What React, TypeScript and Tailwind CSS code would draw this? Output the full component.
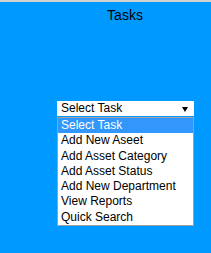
import React from 'react';

const options = [
    'Select Task',
    'Add New Aseet',
    'Add Asset Category',
    'Add Asset Status',
    'Add New Department',
    'View Reports',
    'Quick Search',
];

const TaskSelect: React.FC = () => {
    return (
        <div className="w-[137px]">
            <div className="flex h-[15px] items-center justify-between bg-white pl-[4px] pr-[6px] text-[12px] leading-[15px] text-black">
                <span>Select Task</span>
                <svg width="6" height="5" viewBox="0 0 6 5" className="mt-[1px]">
                    <polygon points="0,0 6,0 3,5" fill="#000" />
                </svg>
            </div>
            <div className="mt-[1px] border border-[#a0a0a0] bg-white text-[12px]">
                {options.map((opt, i) => (
                    <div
                        key={opt}
                        className={`h-[15.3px] pl-[3px] leading-[15.3px] ${i === 0 ? 'bg-[#3297fd] text-white' : 'text-black'}`}
                    >
                        {opt}
                    </div>
                ))}
            </div>
        </div>
    );
};

const App: React.FC = () => {
    return (
        <div
            className="h-[253px] w-[211px] overflow-hidden border-t-2 border-[#d3d3d3] bg-[#0099ff]"
            style={{ fontFamily: '"Liberation Sans", Arial, sans-serif' }}
        >
            <div className="w-[250px] pt-[5px] text-center text-[14px] leading-[16px] text-black">Tasks</div>
            <div className="pl-[57px] pt-[78px]">
                <TaskSelect />
            </div>
        </div>
    );
};

export default App;
